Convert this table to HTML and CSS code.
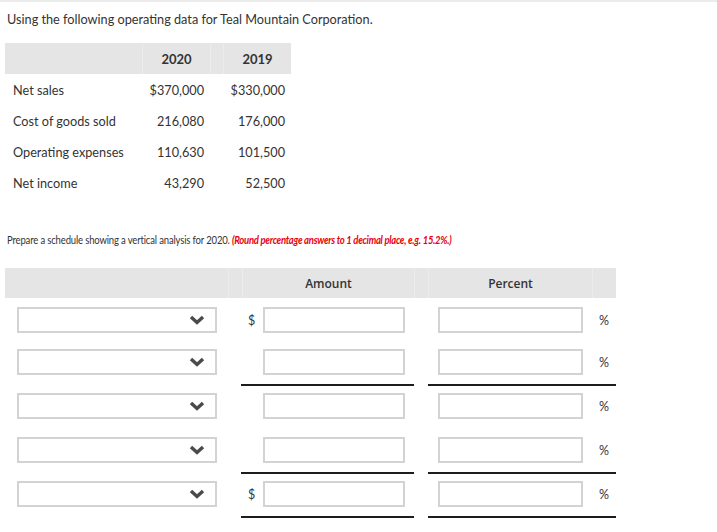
FILE: index.html
```html
<!DOCTYPE html>
<html lang="en">
<head>
<meta charset="utf-8">
<title>Vertical analysis</title>
<link rel="stylesheet" href="styles.css">
</head>
<body>
<div class="page">
  <p class="intro">Using the following operating data for Teal Mountain Corporation.</p>

  <div class="data">
    <div class="hd"></div><div class="hd sep">2020</div><div class="hd sep"></div><div class="hd sep">2019</div>
    <div class="lbl">Net sales</div><div class="num">$370,000</div><div></div><div class="num">$330,000</div>
    <div class="lbl">Cost of goods sold</div><div class="num">216,080</div><div></div><div class="num">176,000</div>
    <div class="lbl">Operating expenses</div><div class="num">110,630</div><div></div><div class="num">101,500</div>
    <div class="lbl">Net income</div><div class="num">43,290</div><div></div><div class="num">52,500</div>
  </div>

  <p class="prompt">Prepare a schedule showing a vertical analysis for 2020. <em class="hint">(Round percentage answers to 1 decimal place, e.g. 15.2%.)</em></p>

  <div class="sched">
    <div class="srow shead">
      <div></div><div class="sep"></div><div class="sep">Amount</div><div class="sep"></div><div class="sep">Percent</div><div class="sep"></div>
    </div>

    <div class="srow first">
      <div class="selcell"><div class="sel"><svg class="chev" width="16" height="10" viewBox="0 0 16 10"><polyline points="2,2 8,7.5 14,2" fill="none" stroke="#4a4a4a" stroke-width="3.4"/></svg></div></div>
      <div></div>
      <div class="amt"><span class="cur">$</span><input type="text"></div>
      <div></div>
      <div class="pct"><input type="text"></div>
      <div class="sign">%</div>
    </div>

    <div class="srow second ul">
      <div class="selcell"><div class="sel"><svg class="chev" width="16" height="10" viewBox="0 0 16 10"><polyline points="2,2 8,7.5 14,2" fill="none" stroke="#4a4a4a" stroke-width="3.4"/></svg></div></div>
      <div></div>
      <div class="amt"><span class="cur"></span><input type="text"></div>
      <div></div>
      <div class="pct"><input type="text"></div>
      <div class="sign">%</div>
    </div>

    <div class="srow">
      <div class="selcell"><div class="sel"><svg class="chev" width="16" height="10" viewBox="0 0 16 10"><polyline points="2,2 8,7.5 14,2" fill="none" stroke="#4a4a4a" stroke-width="3.4"/></svg></div></div>
      <div></div>
      <div class="amt"><span class="cur"></span><input type="text"></div>
      <div></div>
      <div class="pct"><input type="text"></div>
      <div class="sign">%</div>
    </div>

    <div class="srow ul">
      <div class="selcell"><div class="sel"><svg class="chev" width="16" height="10" viewBox="0 0 16 10"><polyline points="2,2 8,7.5 14,2" fill="none" stroke="#4a4a4a" stroke-width="3.4"/></svg></div></div>
      <div></div>
      <div class="amt"><span class="cur"></span><input type="text"></div>
      <div></div>
      <div class="pct"><input type="text"></div>
      <div class="sign">%</div>
    </div>

    <div class="srow ul">
      <div class="selcell"><div class="sel"><svg class="chev" width="16" height="10" viewBox="0 0 16 10"><polyline points="2,2 8,7.5 14,2" fill="none" stroke="#4a4a4a" stroke-width="3.4"/></svg></div></div>
      <div></div>
      <div class="amt"><span class="cur">$</span><input type="text"></div>
      <div></div>
      <div class="pct"><input type="text"></div>
      <div class="sign">%</div>
    </div>
  </div>
</div>
</body>
</html>
```

FILE: styles.css
```css
html, body {
  margin: 0;
  padding: 0;
  background: #fff;
}

body {
  font-family: Lato, "Open Sans", "Liberation Sans", sans-serif;
  font-size: 12.7px;
  color: #333;
}

.page {
  border-top: 2px solid #ebebeb;
}

.intro {
  margin: 9px 0 0 7px;
  line-height: 16px;
}

/* operating data table */
.data {
  display: grid;
  grid-template-columns: 137px 68px 13px 68px;
  grid-auto-rows: 31px;
  margin: 16px 0 0 5px;
  width: max-content;
}

.data > div {
  display: flex;
  align-items: center;
}

.data .hd {
  background: #e5e5e5;
  font-weight: 700;
  font-size: 13px;
  justify-content: center;
}

.data .sep {
  border-left: 1px solid #ececec;
}

.data .lbl {
  padding-left: 8px;
}

.data .num {
  justify-content: flex-end;
  padding-right: 6px;
}

.prompt {
  margin: 34px 0 0 7px;
  width: max-content;
  line-height: 16px;
  font-size: 12.2px;
  letter-spacing: -0.2px;
  white-space: nowrap;
  transform: scaleX(0.78);
  transform-origin: left center;
}

.hint {
  color: #e8000b;
  font-weight: 700;
  font-style: italic;
  letter-spacing: -0.35px;
}

/* schedule */
.sched {
  margin: 20px 0 0 5px;
  width: max-content;
}

.srow {
  display: grid;
  grid-template-columns: 223px 14px 172px 14px 164px 24px;
}

.shead {
  height: 30px;
  background: #e5e5e5;
}

.shead > div {
  display: flex;
  align-items: center;
  justify-content: center;
  font-family: "Open Sans", Lato, sans-serif;
  font-weight: 600;
  font-size: 12px;
  color: #333;
}

.shead .sep {
  border-left: 1px solid #ececec;
}

.srow > div {
  box-sizing: border-box;
}

.srow:not(.shead) > div {
  padding-top: 7px;
  padding-bottom: 9px;
  border-bottom: 2px solid transparent;
  display: flex;
  align-items: center;
}

.srow.first:not(.shead) > div {
  padding-top: 9px;
  padding-bottom: 7px;
  border-bottom: 0;
}

.srow.second:not(.shead) > div {
  padding-top: 9px;
}

.srow.ul:not(.shead) > .amt,
.srow.ul:not(.shead) > .pct,
.srow.ul:not(.shead) > .sign {
  border-bottom-color: #1c1c1c;
}

.srow:not(.shead) > .selcell {
  padding-left: 12px;
}

.sel {
  box-sizing: border-box;
  width: 200px;
  height: 26px;
  border: 2px solid #d3d3d3;
  background: #fff;
  display: flex;
  align-items: center;
  justify-content: flex-end;
  padding-right: 10px;
}

.chev {
  display: block;
}

.srow:not(.shead) > .amt {
  margin-left: -1px;
}

.cur {
  display: inline-block;
  width: 22px;
  padding-left: 7px;
  box-sizing: border-box;
  font-size: 12.5px;
  color: #333;
}

input {
  box-sizing: border-box;
  height: 26px;
  border: 2px solid #d3d3d3;
  background: #fff;
  margin: 0;
  padding: 0 4px;
  font: inherit;
  outline: none;
}

.amt input {
  width: 142px;
}

.srow:not(.shead) > .pct {
  padding-left: 10px;
}

.pct input {
  width: 145px;
}

.srow:not(.shead) > .sign {
  padding-left: 7px;
  font-size: 12.5px;
}
```
